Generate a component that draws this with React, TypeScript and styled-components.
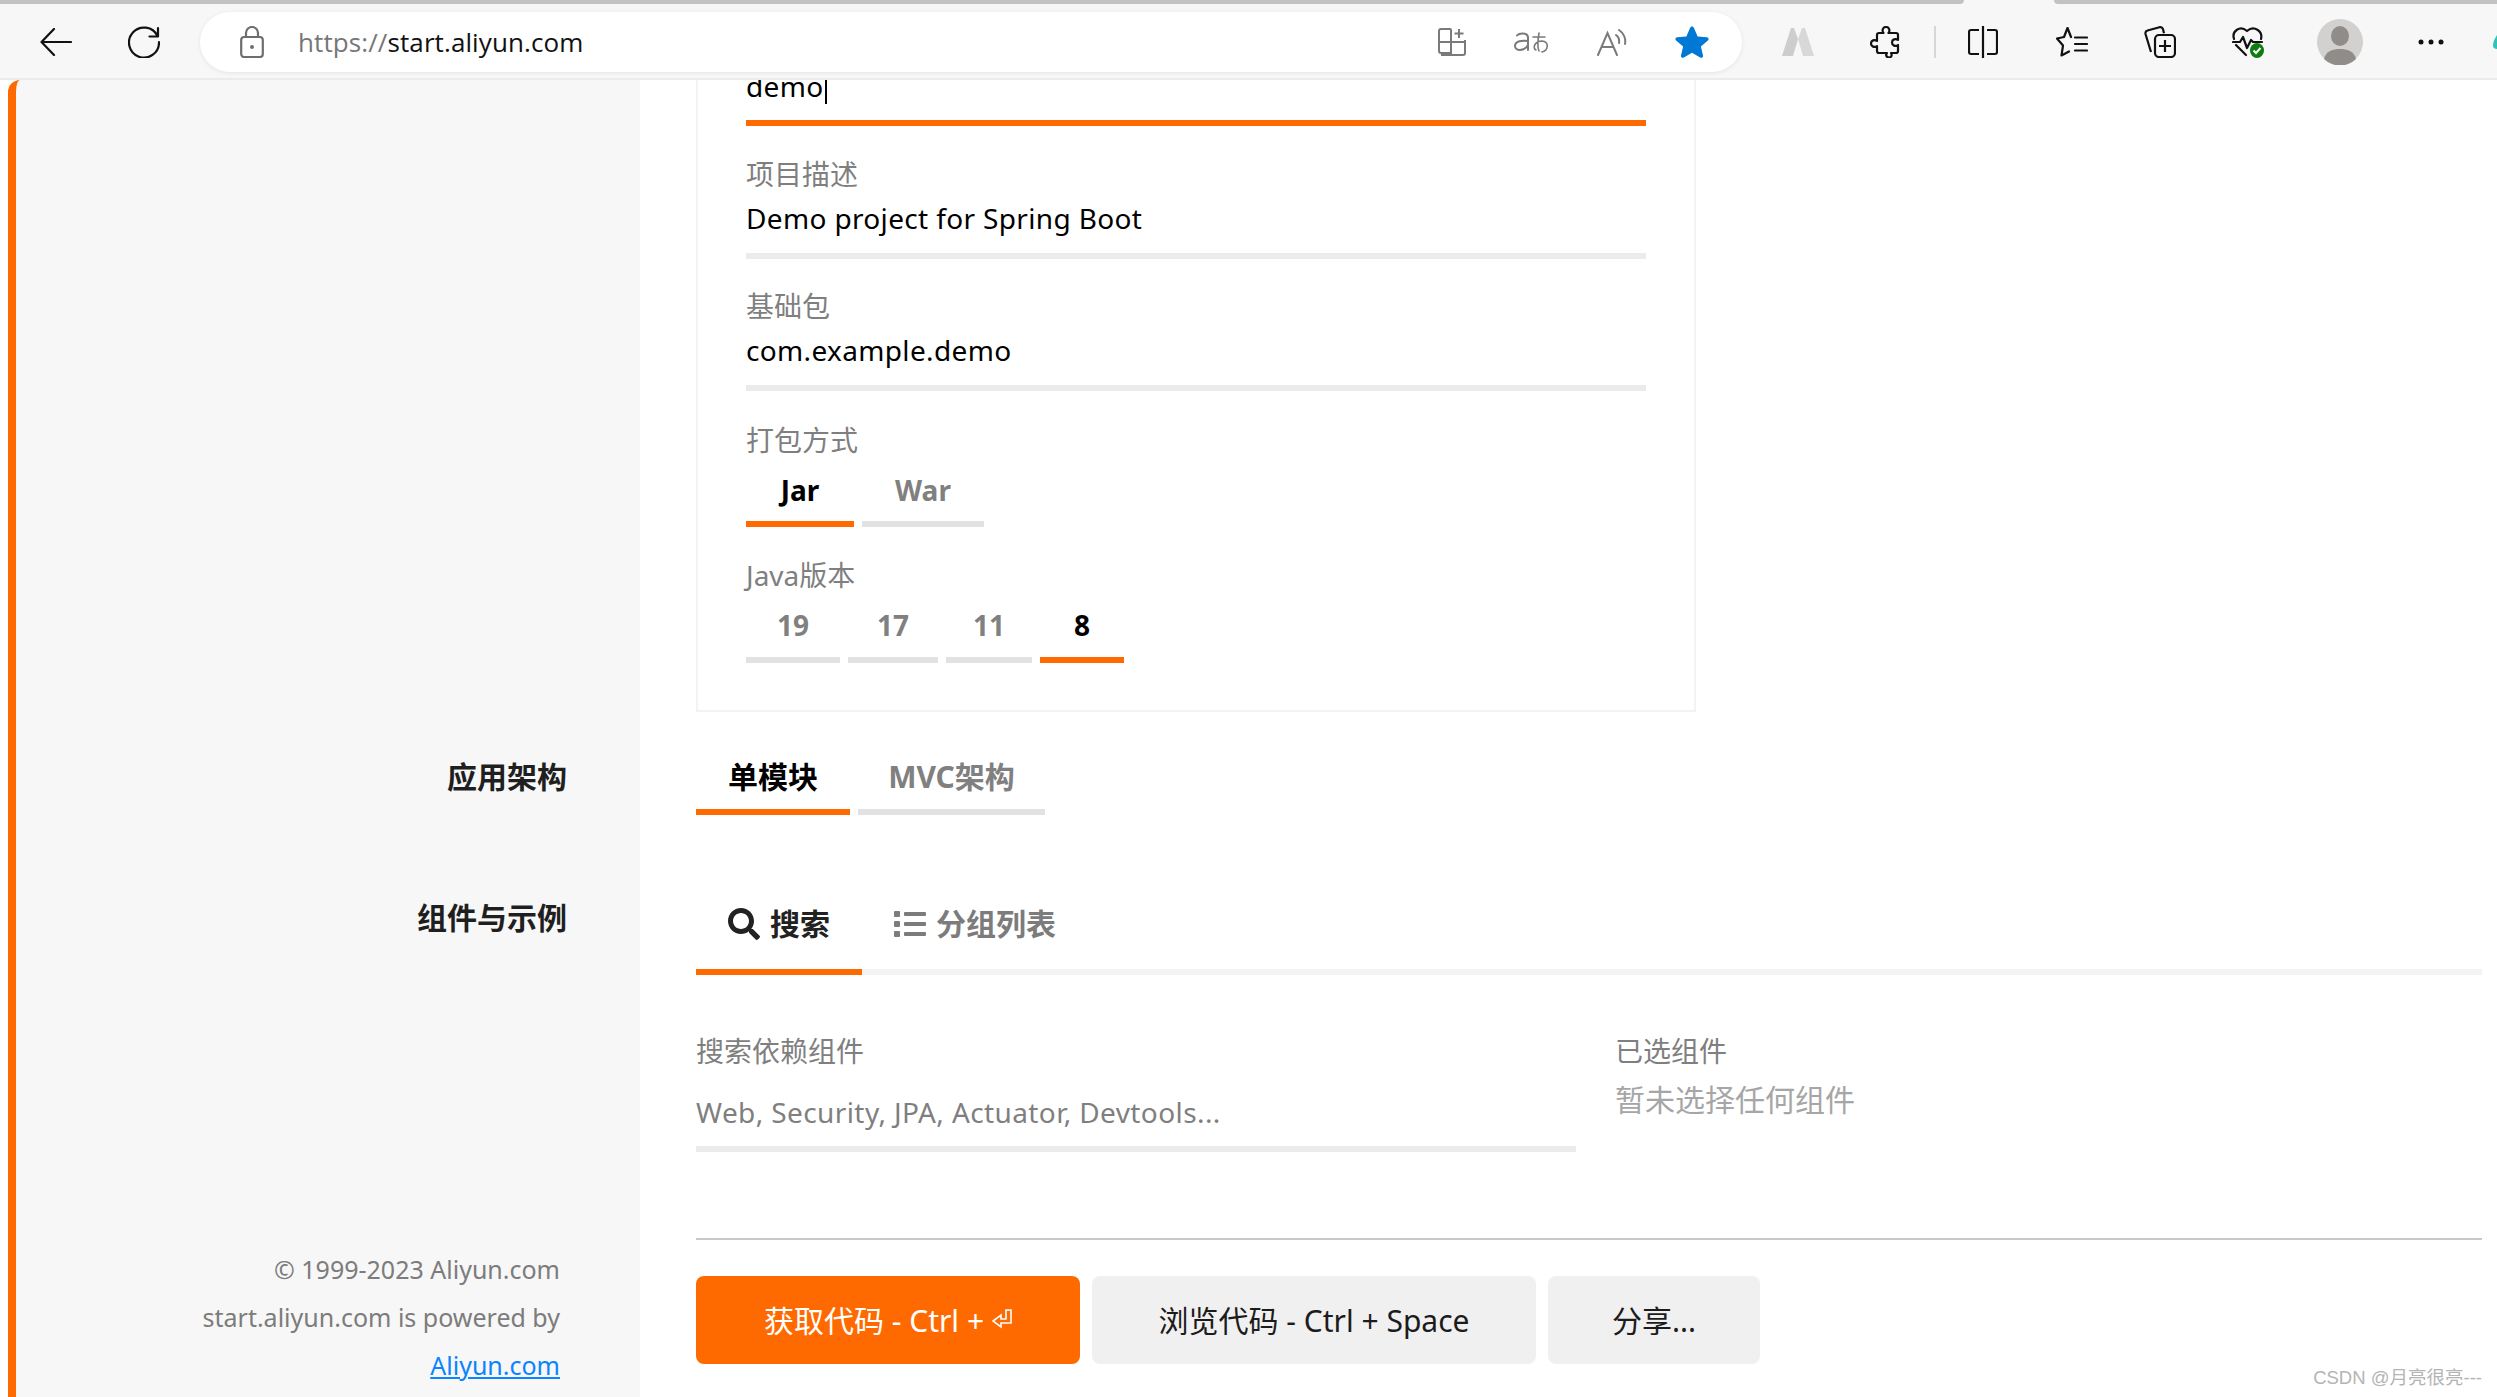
import React from "react";
import styled, { createGlobalStyle } from "styled-components";
import { FaSearch, FaList } from "react-icons/fa";

const ORANGE = "#ff6a00";
const SANS = `"Noto Sans", "Noto Sans CJK SC", sans-serif`;

const Global = createGlobalStyle`
  html, body { margin: 0; padding: 0; background: #fff; }
  body { font-family: ${SANS}; overflow: hidden; }
  * { box-sizing: border-box; }
`;

const Screen = styled.div`
  position: relative;
  width: 2497px;
  height: 1397px;
  display: flex;
  flex-direction: column;
  overflow: hidden;
  background: #fff;
`;

const TabStrip = styled.div`
  display: flex;
  height: 4px;
  background: #f7f7f7;
`;
const TabStripPart = styled.div<{ $w?: number; $side: "l" | "r" }>`
  ${(p) => (p.$w ? `width:${p.$w}px;` : "flex:1;")}
  background: #c2c2c2;
  border-bottom-${(p) => (p.$side === "l" ? "right" : "left")}-radius: 4px;
`;
const TabStripGap = styled.div`
  width: 90px;
`;

const Toolbar = styled.header`
  height: 76px;
  flex: none;
  display: flex;
  align-items: flex-start;
  padding: 8px 0 0 24px;
  background: #f7f7f7;
  border-bottom: 2px solid #ebebeb;
`;
const Slot = styled.div<{ $left?: number; $w?: number }>`
  width: ${(p) => p.$w ?? 64}px;
  height: 60px;
  flex: none;
  margin-left: ${(p) => p.$left ?? 0}px;
  display: flex;
  align-items: center;
  justify-content: center;
`;
const ToolDivider = styled.div`
  width: 2px;
  height: 32px;
  flex: none;
  margin: 14px 0 0 17px;
  background: #d6d6d6;
`;
const AddressBar = styled.div`
  width: 1542px;
  height: 60px;
  flex: none;
  margin-left: 24px;
  padding: 0 18px 0 40px;
  display: flex;
  align-items: center;
  background: #fff;
  border-radius: 30px;
  box-shadow: 0 1px 4px rgba(0, 0, 0, 0.08);
`;
const Url = styled.div`
  margin-left: 34px;
  font: 400 26px/36px "Open Sans", sans-serif;
  letter-spacing: 0.1px;
  color: #111;
`;
const UrlScheme = styled.span`
  color: #767676;
`;
const BarIcons = styled.div`
  margin-left: auto;
  display: flex;
  gap: 16px;
`;

const Page = styled.div`
  flex: 1;
  min-height: 0;
  display: flex;
  padding-left: 8px;
`;

const Sidebar = styled.aside`
  width: 632px;
  flex: none;
  display: flex;
  flex-direction: column;
  align-items: flex-end;
  padding: 677px 73px 8px 0;
  background: #f7f7f7;
  border-left: 8px solid ${ORANGE};
  border-top-left-radius: 12px;
`;
const SideLabel = styled.div<{ $top?: number }>`
  margin-top: ${(p) => p.$top ?? 0}px;
  font-size: 30px;
  font-weight: 700;
  line-height: 40px;
  color: #1f1f1f;
`;
const SideFooter = styled.footer`
  margin-top: auto;
  margin-right: 7px;
  text-align: right;
  font-size: 25px;
  line-height: 48px;
  color: #7c7c7c;
`;
const FooterLink = styled.a`
  color: #0a84ff;
  text-decoration: underline;
`;

const Main = styled.main`
  flex: 1;
  min-width: 0;
  overflow: hidden;
  padding: 0 15px 0 56px;
`;
const Scrolled = styled.div`
  margin-top: -19px;
`;
const Card = styled.section`
  width: 1000px;
  padding: 0 48px 47px;
  border: 2px solid #f3f3f3;
  border-top: 0;
`;
const Field = styled.div<{ $top?: number }>`
  margin-top: ${(p) => p.$top ?? 28}px;
`;
const FieldLabel = styled.div`
  font-size: 28px;
  line-height: 40px;
  color: #7f7f7f;
`;
const FieldValue = styled.div<{ $active?: boolean }>`
  height: 65px;
  font-size: 28px;
  letter-spacing: 0.35px;
  line-height: ${(p) => (p.$active ? 50 : 48)}px;
  color: #000;
  border-bottom: 6px solid ${(p) => (p.$active ? ORANGE : "#ebebeb")};
`;
const Caret = styled.span`
  display: inline-block;
  width: 2px;
  height: 30px;
  margin-left: 1px;
  vertical-align: -7px;
  background: #000;
`;

const Choices = styled.div<{ $top?: number }>`
  display: flex;
  gap: 8px;
  margin-top: ${(p) => p.$top ?? 0}px;
`;
const Choice = styled.div<{ $on?: boolean; $w: number; $size?: number; $pt?: number; $pb?: number }>`
  width: ${(p) => p.$w}px;
  padding: ${(p) => p.$pt ?? 12}px 0 ${(p) => p.$pb ?? 12}px;
  text-align: center;
  font-size: ${(p) => p.$size ?? 28}px;
  font-weight: 700;
  line-height: 40px;
  color: ${(p) => (p.$on ? "#000" : "#808080")};
  border-bottom: 6px solid ${(p) => (p.$on ? ORANGE : "#e2e2e2")};
`;

const CompTabs = styled.div`
  display: flex;
  margin-top: 64px;
  border-bottom: 6px solid #f3f3f3;
`;
const CompTab = styled.div<{ $on?: boolean }>`
  display: flex;
  align-items: center;
  gap: 10px;
  margin-bottom: -6px;
  padding: 25px 32px;
  font-size: 30px;
  font-weight: 700;
  line-height: 40px;
  color: ${(p) => (p.$on ? "#222" : "#7c7c7c")};
  border-bottom: 6px solid ${(p) => (p.$on ? ORANGE : "transparent")};
  svg { width: 32px; height: 32px; }
`;

const SearchRow = styled.div`
  display: flex;
  gap: 39px;
  margin-top: 56px;
`;
const SearchCol = styled.div<{ $w?: number }>`
  width: ${(p) => p.$w ?? 880}px;
`;
const Placeholder = styled.div`
  padding: 21px 0 14px;
  font-size: 28px;
  letter-spacing: 0.4px;
  line-height: 40px;
  color: #7f7f7f;
  border-bottom: 6px solid #ebebeb;
`;
const Empty = styled.div`
  margin-top: 9px;
  font-size: 30px;
  line-height: 40px;
  color: #a6a6a6;
`;

const Rule = styled.hr`
  margin: 86px 0 0;
  border: 0;
  border-top: 2px solid #c8c8c8;
`;
const Actions = styled.div`
  display: flex;
  gap: 12px;
  margin-top: 36px;
`;
const ActionButton = styled.button<{ $w: number; $primary?: boolean }>`
  width: ${(p) => p.$w}px;
  height: 88px;
  display: flex;
  align-items: center;
  justify-content: center;
  gap: 8px;
  border: 0;
  border-radius: 8px;
  padding: 0 0 3px;
  font-family: ${SANS};
  font-size: 30px;
  background: ${(p) => (p.$primary ? ORANGE : "#f0f0f0")};
  color: ${(p) => (p.$primary ? "#fff" : "#1c1c1c")};
`;
const Watermark = styled.div`
  position: absolute;
  right: 15px;
  bottom: 6px;
  font-family: "Liberation Sans", "Noto Sans CJK SC", sans-serif;
  font-size: 18.5px;
  line-height: 26px;
  color: #b4b4b4;
`;

const Svg = styled.svg`
  display: block;
  fill: none;
`;

const Back = () => (
  <Svg width="32" height="28" viewBox="0 0 32 28" stroke="#111" strokeWidth="2.2" strokeLinecap="round" strokeLinejoin="round">
    <path d="M31 14H1.5M14 1 1.5 14 14 27" />
  </Svg>
);
const Refresh = () => (
  <Svg width="32" height="32" viewBox="0 0 32 32" stroke="#111" strokeWidth="2.2" strokeLinecap="round" strokeLinejoin="round">
    <path d="M29.5 10A15 15 0 1 0 31 16M30 2v8.5h-8.5" />
  </Svg>
);
const Lock = () => (
  <Svg width="24" height="32" viewBox="0 0 24 32" stroke="#6e6e6e" strokeWidth="2.2" strokeLinejoin="round">
    <rect x="1.2" y="11" width="21.6" height="20" rx="3" />
    <path d="M6 11V7a6 6 0 0 1 12 0v4" />
    <circle cx="12" cy="21" r="2" fill="#6e6e6e" stroke="none" />
  </Svg>
);
const AppAdd = () => (
  <Svg width="28" height="28" viewBox="0 0 28 28" stroke="#7a7a7a" strokeWidth="2">
    <path d="M1 14V3a2 2 0 0 1 2-2h9a1 1 0 0 1 1 1v23H3a2 2 0 0 1-2-2Zm0 0h26m0-2v13a2 2 0 0 1-2 2H3M13 27h12M21 1v9M16.500 5.500h9" />
  </Svg>
);
const Translate = () => (
  <Svg width="36" height="24" viewBox="0 0 36 24" stroke="#7a7a7a" strokeWidth="2" strokeLinecap="round">
    <path d="M3 5.500C5 3 13 2 14 7v13M14 11C8 10 1 11 1 16s9 6 13-1" />
    <path d="M19 7h12M25 3c-1 6-2 14 0 18M22 20c-4-2-1-9 6-9 7 .5 7 9 0 11" strokeWidth="1.600" />
  </Svg>
);
const ReadAloud = () => (
  <Svg width="30" height="28" viewBox="0 0 30 28" stroke="#7a7a7a" strokeWidth="2" strokeLinecap="round">
    <path d="M1 27 10.500 5 20 27M4.500 19h12M19 7c3 2 3.500 5 3 8M22 2c5 3 7 9 6 14" />
  </Svg>
);
const BlueStar = () => (
  <Svg width="34" height="32" viewBox="0 0 34 32">
    <path d="M17 .5c1 0 1.600.6 2 1.500l3.600 8.500 9.200.8c1.800.2 2.400 2 1.100 3.200l-7 6 2.100 9c.4 1.700-1.300 2.900-2.800 2L17 26.800 8.800 31.500c-1.500.9-3.200-.3-2.800-2l2.100-9-7-6C-.2 13.300.4 11.500 2.200 11.300l9.200-.8L15 2c.4-.9 1-1.500 2-1.500Z" fill="#0078d4" />
  </Svg>
);
const AdBlock = () => (
  <Svg width="32" height="28" viewBox="0 0 32 28">
    <path d="M9 0 0 28h11l5-17-4-11Z" fill="#cdcdcd" />
    <path d="M23 0 32 28H21l-5-17 4-11Z" fill="#d8d8d8" />
  </Svg>
);
const Puzzle = () => (
  <Svg width="30" height="32" viewBox="0 0 30 32" stroke="#111" strokeWidth="2.2" strokeLinejoin="round">
    <path d="M9 7h4.500c-2-2.500-.5-6 2.500-6s4.500 3.500 2.500 6H26a2 2 0 0 1 2 2v5c-2.500-2-6-.5-6 2.500s3.500 4.500 6 2.500v6a2 2 0 0 1-2 2h-5c1.500 2.500 0 4.500-2 4.500s-4-2-2-4.500H9a2 2 0 0 1-2-2v-5c-2.500 2-6 .5-6-2.500s3.500-4.500 6-2.500V9a2 2 0 0 1 2-2Z" />
  </Svg>
);
const SplitScreen = () => (
  <Svg width="30" height="32" viewBox="0 0 30 32" stroke="#111" strokeWidth="2.2">
    <path d="M15 0v32M11 4H3a2 2 0 0 0-2 2v20a2 2 0 0 0 2 2h8M19 4h8a2 2 0 0 1 2 2v20a2 2 0 0 1-2 2h-8" />
  </Svg>
);
const Favourites = () => (
  <Svg width="32" height="30" viewBox="0 0 32 30" stroke="#111" strokeWidth="2.2" strokeLinejoin="round" strokeLinecap="round">
    <path d="M15 10 11.500 1 8 10 1 11.500l6 7L5.500 28.500 13 24.500" />
    <path d="M19 10.500h12M19 17h12M19 23.500h12" />
  </Svg>
);
const Collections = () => (
  <Svg width="32" height="32" viewBox="0 0 32 32" stroke="#111" strokeWidth="2.2" strokeLinejoin="round">
    <path d="M7 26 1.500 8a3 3 0 0 1 2-3.500l12-3.300c1.600-.3 3 .5 3.500 2l1 4" />
    <rect x="11" y="9" width="20" height="22" rx="4" />
    <path d="M21 14v12M15 20h12" />
  </Svg>
);
const Heart = () => (
  <Svg width="32" height="32" viewBox="0 0 32 32">
    <g stroke="#111" strokeWidth="2.200" strokeLinejoin="round" strokeLinecap="round" fill="none">
      <path d="M2 13C-.5 5 8-1 15 5c7-6 16 0 14 8" />
      <path d="M1 16h7l3-5 4 11 4-8 2 2h9" />
      <path d="M4 19l10 10" />
    </g>
    <ellipse cx="25" cy="24.500" rx="7" ry="7.500" fill="#107c10" />
    <path d="m21.500 24.500 2.500 2.500 4.500-5" stroke="#fff" strokeWidth="2" fill="none" />
  </Svg>
);
const Avatar = () => (
  <Svg width="46" height="46" viewBox="0 0 46 46">
    <circle cx="23" cy="23" r="23" fill="#d2d1cf" />
    <ellipse cx="23" cy="17" rx="9" ry="10" fill="#8f8c89" />
    <path d="M7 40c2-8 9-10 16-10s14 2 16 10a23 23 0 0 1-32 0Z" fill="#8f8c89" />
  </Svg>
);
const Dots = () => (
  <Svg width="26" height="6" viewBox="0 0 26 6">
    <circle cx="3" cy="3" r="2.500" fill="#111" />
    <circle cx="13" cy="3" r="2.500" fill="#111" />
    <circle cx="23" cy="3" r="2.500" fill="#111" />
  </Svg>
);
const Drop = () => (
  <Svg width="8" height="28" viewBox="0 0 8 28">
    <path d="M8 0C4 6 0 14 0 21c0 4 3 7 8 7Z" fill="#2ec4b6" />
  </Svg>
);
const ReturnKey = () => (
  <Svg width="20" height="20" viewBox="0 0 20 20" stroke="#fff" strokeWidth="1.600">
    <path d="M19 1v13H9v4L1 12l8-6v4h5V1Z" />
  </Svg>
);

export default function App() {
  return (
    <Screen>
      <Global />
      <TabStrip>
        <TabStripPart $w={1964} $side="l" />
        <TabStripGap />
        <TabStripPart $side="r" />
      </TabStrip>
      <Toolbar>
        <Slot><Back /></Slot>
        <Slot $left={24}><Refresh /></Slot>
        <AddressBar>
          <Lock />
          <Url><UrlScheme>https://</UrlScheme>start.aliyun.com</Url>
          <BarIcons>
            <Slot><AppAdd /></Slot>
            <Slot><Translate /></Slot>
            <Slot><ReadAloud /></Slot>
            <Slot><BlueStar /></Slot>
          </BarIcons>
        </AddressBar>
        <Slot $left={24}><AdBlock /></Slot>
        <Slot $left={23}><Puzzle /></Slot>
        <ToolDivider />
        <Slot $left={15}><SplitScreen /></Slot>
        <Slot $left={25}><Favourites /></Slot>
        <Slot $left={24}><Collections /></Slot>
        <Slot $left={24}><Heart /></Slot>
        <Slot $left={28}><Avatar /></Slot>
        <Slot $left={27}><Dots /></Slot>
        <Slot $left={30} $w={4}><Drop /></Slot>
      </Toolbar>
      <Page>
        <Sidebar>
          <SideLabel>应用架构</SideLabel>
          <SideLabel $top={101}>组件与示例</SideLabel>
          <SideFooter>
            <div>© 1999-2023 Aliyun.com</div>
            <div>start.aliyun.com is powered by</div>
            <div><FooterLink href="#">Aliyun.com</FooterLink></div>
          </SideFooter>
        </Sidebar>
        <Main>
          <Scrolled>
            <Card>
              <Field $top={0}>
                <FieldValue $active>demo<Caret /></FieldValue>
              </Field>
              <Field>
                <FieldLabel>项目描述</FieldLabel>
                <FieldValue>Demo project for Spring Boot</FieldValue>
              </Field>
              <Field $top={27}>
                <FieldLabel>基础包</FieldLabel>
                <FieldValue>com.example.demo</FieldValue>
              </Field>
              <Field $top={29}>
                <FieldLabel>打包方式</FieldLabel>
                <Choices>
                  <Choice $on $w={108} $pt={10} $pb={11}>Jar</Choice>
                  <Choice $w={122} $pt={10} $pb={11}>War</Choice>
                </Choices>
              </Field>
              <Field>
                <FieldLabel>Java版本</FieldLabel>
                <Choices>
                  <Choice $w={94} $pt={10}>19</Choice>
                  <Choice $w={90} $pt={10}>17</Choice>
                  <Choice $w={86} $pt={10}>11</Choice>
                  <Choice $w={84} $pt={10} $on>8</Choice>
                </Choices>
              </Field>
            </Card>
            <Choices $top={33}>
              <Choice $on $w={154} $size={30}>单模块</Choice>
              <Choice $w={187} $size={30}>MVC架构</Choice>
            </Choices>
            <CompTabs>
              <CompTab $on><FaSearch />搜索</CompTab>
              <CompTab><FaList />分组列表</CompTab>
            </CompTabs>
            <SearchRow>
              <SearchCol>
                <FieldLabel>搜索依赖组件</FieldLabel>
                <Placeholder>Web, Security, JPA, Actuator, Devtools...</Placeholder>
              </SearchCol>
              <SearchCol $w={600}>
                <FieldLabel>已选组件</FieldLabel>
                <Empty>暂未选择任何组件</Empty>
              </SearchCol>
            </SearchRow>
            <Rule />
            <Actions>
              <ActionButton $w={384} $primary>获取代码 - Ctrl + <ReturnKey /></ActionButton>
              <ActionButton $w={444}>浏览代码 - Ctrl + Space</ActionButton>
              <ActionButton $w={212}>分享...</ActionButton>
            </Actions>
          </Scrolled>
        </Main>
      </Page>
      <Watermark>CSDN @月亮很亮---</Watermark>
    </Screen>
  );
}
